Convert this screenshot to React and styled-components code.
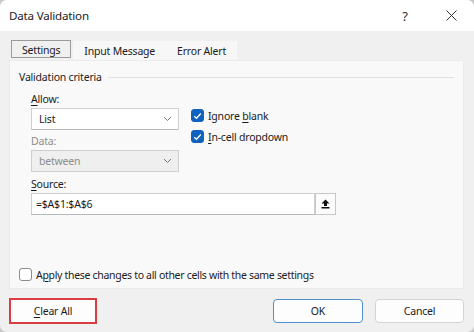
import React from "react";
import styled, { createGlobalStyle } from "styled-components";

const GlobalStyle = createGlobalStyle`
  html, body {
    margin: 0;
    padding: 0;
    background: #c9c9c9;
  }
  body {
    font-family: "Noto Sans", "Open Sans", sans-serif;
    color: #1b1b1b;
    letter-spacing: -0.2px;
  }
`;

const Window = styled.div`
  width: 474px;
  height: 332px;
  display: flex;
  flex-direction: column;
  border-radius: 7px;
  overflow: hidden;
  background: #f0f0f0;
  box-sizing: border-box;
`;

const TitleBar = styled.div`
  height: 31px;
  flex: none;
  background: #ffffff;
  display: flex;
  align-items: center;
  padding-left: 9px;
  font-size: 11.6px;
`;

const TitleText = styled.div`
  flex: 1;
  margin-top: -1px;
`;

const TitleButton = styled.div`
  width: 46px;
  height: 31px;
  display: flex;
  align-items: center;
  justify-content: center;
  font-size: 13px;
  color: #333;
`;

const Body = styled.div`
  flex: 1;
  display: flex;
  flex-direction: column;
  padding: 9px 10px 0 9px;
`;

const TabStrip = styled.div`
  display: flex;
  height: 20px;
  padding-left: 2px;
  align-items: flex-end;
`;

const Tab = styled.div`
  height: ${(p) => (p.active ? "18px" : "19px")};
  box-sizing: border-box;
  padding: 1px 10px 0;
  display: flex;
  align-items: center;
  font-size: 10.5px;
  background: ${(p) => (p.active ? "#f0f0f0" : "#f7f7f7")};
  border: 1px solid ${(p) => (p.active ? "#9a9a9a" : "transparent")};
  margin-bottom: ${(p) => (p.active ? "2px" : "0")};
  margin-right: ${(p) => (p.active ? "2px" : "0")};
`;

const Panel = styled.div`
  height: 229px;
  box-sizing: border-box;
  background: #f9f9f9;
  border: 1px solid #ebebeb;
  display: flex;
  flex-direction: column;
  padding: 9px 9px 7px 9px;
`;

const GroupHeader = styled.div`
  display: flex;
  align-items: center;
  gap: 6px;
  height: 14px;
  font-size: 10.5px;
  &::after {
    content: "";
    flex: 1;
    height: 1px;
    background: #e0e0e0;
  }
`;

const Criteria = styled.div`
  padding-left: 12px;
  display: grid;
  grid-template-columns: 148px 1fr;
  column-gap: 12px;
`;

const Column = styled.div`
  display: flex;
  flex-direction: column;
`;

const Label = styled.div`
  height: 14px;
  line-height: 14px;
  font-size: 10.5px;
  margin-top: ${(p) => p.top}px;
  color: ${(p) => (p.disabled ? "#8d8d8d" : "#1b1b1b")};
`;

const Combo = styled.div`
  height: 22px;
  box-sizing: border-box;
  margin-top: 2px;
  display: flex;
  align-items: center;
  justify-content: space-between;
  padding: 0 6px 0 7px;
  font-size: 10.5px;
  background: ${(p) => (p.disabled ? "#efefef" : "#ffffff")};
  color: ${(p) => (p.disabled ? "#8d8d8d" : "#1b1b1b")};
  border: 1px solid #cfcfcf;
  border-bottom-color: ${(p) => (p.disabled ? "#cfcfcf" : "#b8b8b8")};
`;

const SourceRow = styled.div`
  grid-column: 1 / 3;
  display: flex;
  margin-top: 2px;
  width: 305px;
  height: 22px;
`;

const SourceInput = styled.div`
  flex: 1;
  box-sizing: border-box;
  background: #ffffff;
  border: 1px solid #cfcfcf;
  border-bottom-color: #b8b8b8;
  display: flex;
  align-items: center;
  padding-left: 4px;
  font-size: 10.5px;
`;

const RefButton = styled.div`
  width: 21px;
  box-sizing: border-box;
  border: 1px solid #c8c8c8;
  background: #fbfbfb;
  display: flex;
  align-items: center;
  justify-content: center;
`;

const Checks = styled.div`
  display: flex;
  flex-direction: column;
  gap: 8px;
  margin-top: 25px;
`;

const CheckRow = styled.div`
  display: flex;
  align-items: center;
  gap: 4px;
  font-size: 10.5px;
  letter-spacing: ${(p) => (p.tight ? "-0.31px" : "-0.2px")};
  height: 13px;
`;

const Box = styled.div`
  width: 13px;
  height: 13px;
  box-sizing: border-box;
  border-radius: 3px;
  flex: none;
  display: flex;
  align-items: center;
  justify-content: center;
  background: ${(p) => (p.checked ? "#0f62be" : "#ffffff")};
  border: 1px solid ${(p) => (p.checked ? "#0f62be" : "#8c8c8c")};
`;

const Key = styled.span`
  text-decoration: underline;
  text-underline-offset: 2px;
  text-decoration-thickness: 1px;
`;

const Footer = styled.div`
  display: flex;
  align-items: center;
  margin-top: 9px;
  gap: 12px;
`;

const Button = styled.div`
  width: ${(p) => p.w}px;
  height: ${(p) => (p.marked ? "26px" : "24px")};
  box-sizing: border-box;
  display: flex;
  align-items: center;
  justify-content: center;
  font-size: 10.5px;
  background: #fdfdfd;
  border-radius: ${(p) => (p.marked ? "0" : "4px")};
  border: ${(p) =>
    p.marked
      ? "2px solid #dc3b41"
      : p.primary
      ? "1px solid #4f8fd0"
      : "1px solid #d3d3d3"};
  margin-right: ${(p) => (p.push ? "auto" : "0")};
`;

const Spacer = styled.div`
  flex: 1;
  display: flex;
  flex-direction: column;
  justify-content: flex-end;
`;

const Chevron = () => (
  <svg width="9" height="6" viewBox="0 0 9 6">
    <path d="M1 1 L4.5 4.5 L8 1" fill="none" stroke="#7a7a7a" strokeWidth="1" />
  </svg>
);

const Check = () => (
  <svg width="9" height="8" viewBox="0 0 9 8">
    <path d="M1.2 4.2 L3.5 6.3 L7.8 1.5" fill="none" stroke="#fff" strokeWidth="1.3" />
  </svg>
);

const CloseIcon = () => (
  <svg width="11" height="11" viewBox="0 0 11 11">
    <path d="M0.5 0.5 L10.5 10.5 M10.5 0.5 L0.5 10.5" stroke="#333" strokeWidth="1" />
  </svg>
);

const UploadIcon = () => (
  <svg width="9" height="10" viewBox="0 0 9 10">
    <path d="M4.5 0.5 L8.5 4.5 L6 4.5 L6 7 L3 7 L3 4.5 L0.5 4.5 Z" fill="#111" />
    <rect x="0.5" y="8" width="8" height="1.5" fill="#111" />
  </svg>
);

export default function App() {
  return (
    <>
      <GlobalStyle />
      <Window>
        <TitleBar>
          <TitleText>Data Validation</TitleText>
          <TitleButton>?</TitleButton>
          <TitleButton>
            <CloseIcon />
          </TitleButton>
        </TitleBar>
        <Body>
          <TabStrip>
            <Tab active>Settings</Tab>
            <Tab>Input Message</Tab>
            <Tab>Error Alert</Tab>
          </TabStrip>
          <Panel>
            <GroupHeader>Validation criteria</GroupHeader>
            <Criteria>
              <Column>
                <Label top={8}>
                  <Key>A</Key>llow:
                </Label>
                <Combo>
                  List
                  <Chevron />
                </Combo>
                <Label top={4} disabled>
                  Data:
                </Label>
                <Combo disabled>
                  between
                  <Chevron />
                </Combo>
              </Column>
              <Checks>
                <CheckRow>
                  <Box checked>
                    <Check />
                  </Box>
                  <span>
                    Ignore <Key>b</Key>lank
                  </span>
                </CheckRow>
                <CheckRow>
                  <Box checked>
                    <Check />
                  </Box>
                  <span>
                    <Key>I</Key>n-cell dropdown
                  </span>
                </CheckRow>
              </Checks>
              <Label top={5}>
                <Key>S</Key>ource:
              </Label>
              <div />
              <SourceRow>
                <SourceInput>=$A$1:$A$6</SourceInput>
                <RefButton>
                  <UploadIcon />
                </RefButton>
              </SourceRow>
            </Criteria>
            <Spacer>
              <CheckRow tight>
                <Box />
                <span>
                  A<Key>p</Key>ply these changes to all other cells with the same settings
                </span>
              </CheckRow>
            </Spacer>
          </Panel>
          <Footer>
            <Button w={88} marked push>
              <span>
                <Key>C</Key>lear All
              </span>
            </Button>
            <Button w={90} primary>
              OK
            </Button>
            <Button w={89}>Cancel</Button>
          </Footer>
        </Body>
      </Window>
    </>
  );
}
